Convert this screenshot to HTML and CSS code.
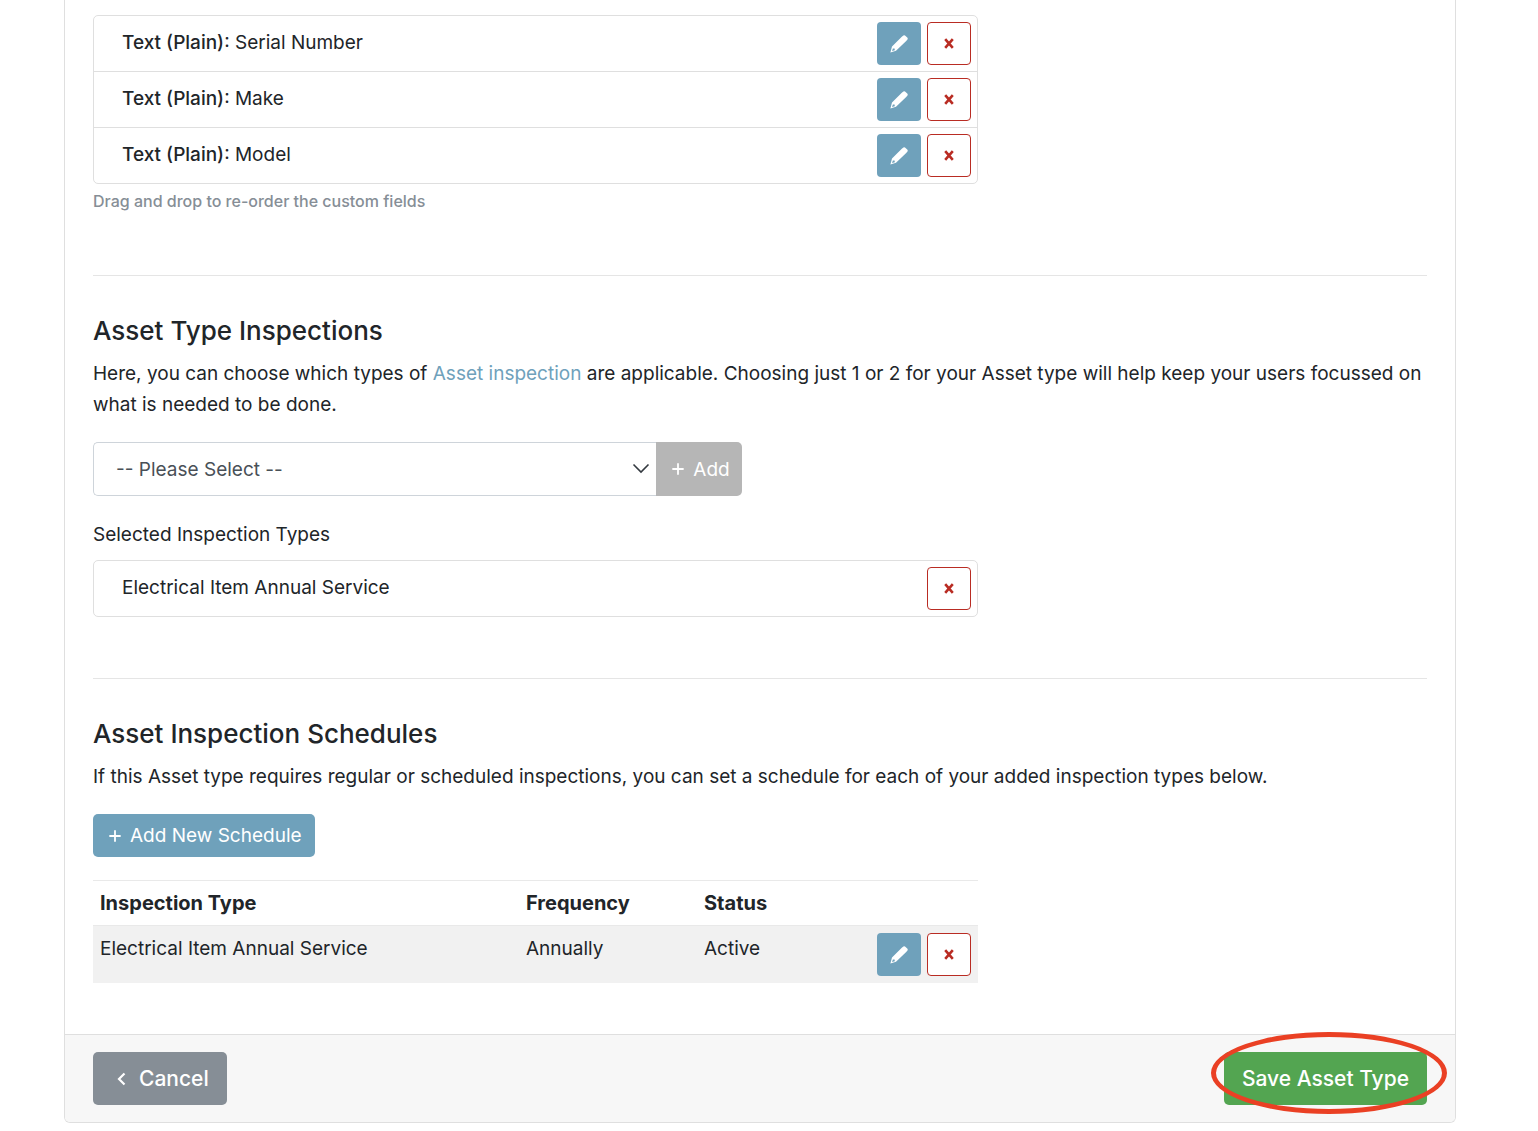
FILE: index.html
```html
<!DOCTYPE html>
<html lang="en">
    <head>
        <meta charset="utf-8">
        <title>Asset Type</title>
        <link rel="stylesheet" href="styles.css">
    </head>
    <body>
        <!-- shared icons -->
        <svg class="sprite" aria-hidden="true">
            <symbol id="pencil" viewBox="0 0 18 18">
                <path fill-rule="evenodd" d="M11.8 1.8 L13.4 0.5 Q14.2 0 15 0.5 L17.5 2.8 Q18 3.6 17.5 4.4 L16.2 6 L6 15.8 L0.4 17.6 L2 11.6 Z M2.9 13.4 L2 16 L4.8 15.2 L4.6 13.6 Z"/>
            </symbol>
            <symbol id="cross" viewBox="0 0 10 11">
                <path d="M1.2 1.2 L8.8 9.8 M8.8 1.2 L1.2 9.8"/>
            </symbol>
            <symbol id="plus" viewBox="0 0 12 12">
                <path d="M6 1 V11 M1 6 H11"/>
            </symbol>
        </svg>

        <form class="card">
            <div class="card-body">
                <section>
                    <ul class="list">
                        <li>
                            <span class="name"><b>Text (Plain)</b>: Serial Number</span>
                            <button type="button" class="btn btn-icon btn-blue" aria-label="Edit"><svg class="pencil"><use href="#pencil"/></svg></button>
                            <button type="button" class="btn btn-icon btn-red" aria-label="Remove"><svg class="cross"><use href="#cross"/></svg></button>
                        </li>
                        <li>
                            <span class="name"><b>Text (Plain)</b>: Make</span>
                            <button type="button" class="btn btn-icon btn-blue" aria-label="Edit"><svg class="pencil"><use href="#pencil"/></svg></button>
                            <button type="button" class="btn btn-icon btn-red" aria-label="Remove"><svg class="cross"><use href="#cross"/></svg></button>
                        </li>
                        <li>
                            <span class="name"><b>Text (Plain)</b>: Model</span>
                            <button type="button" class="btn btn-icon btn-blue" aria-label="Edit"><svg class="pencil"><use href="#pencil"/></svg></button>
                            <button type="button" class="btn btn-icon btn-red" aria-label="Remove"><svg class="cross"><use href="#cross"/></svg></button>
                        </li>
                    </ul>
                    <p class="hint">Drag and drop to re-order the custom fields</p>
                </section>

                <section>
                    <h2>Asset Type Inspections</h2>
                    <p>Here, you can choose which types of <a href="#">Asset inspection</a> are applicable. Choosing just 1 or 2 for your Asset type will help keep your users focussed on what is needed to be done.</p>
                    <div class="input-group">
                        <div class="select">
                            <select aria-label="Inspection type">
                                <option>-- Please Select --</option>
                            </select>
                            <svg class="chevron" viewBox="0 0 18 11"><path d="M1.5 1.5 L9 9 L16.5 1.5"/></svg>
                        </div>
                        <button type="button" class="btn btn-add"><svg class="plus"><use href="#plus"/></svg>Add</button>
                    </div>
                    <div class="label" id="selected">Selected Inspection Types</div>
                    <ul class="list" aria-labelledby="selected">
                        <li>
                            <span class="name">Electrical Item Annual Service</span>
                            <button type="button" class="btn btn-icon btn-red" aria-label="Remove"><svg class="cross"><use href="#cross"/></svg></button>
                        </li>
                    </ul>
                </section>

                <section>
                    <h2>Asset Inspection Schedules</h2>
                    <p>If this Asset type requires regular or scheduled inspections, you can set a schedule for each of your added inspection types below.</p>
                    <button type="button" class="btn btn-blue btn-new"><svg class="plus"><use href="#plus"/></svg>Add New Schedule</button>
                    <table>
                        <thead>
                            <tr>
                                <th class="col-type">Inspection Type</th>
                                <th class="col-freq">Frequency</th>
                                <th class="col-status">Status</th>
                                <th></th>
                            </tr>
                        </thead>
                        <tbody>
                            <tr>
                                <td>Electrical Item Annual Service</td>
                                <td>Annually</td>
                                <td>Active</td>
                                <td>
                                    <div class="actions">
                                        <button type="button" class="btn btn-icon btn-blue" aria-label="Edit"><svg class="pencil"><use href="#pencil"/></svg></button>
                                        <button type="button" class="btn btn-icon btn-red" aria-label="Remove"><svg class="cross"><use href="#cross"/></svg></button>
                                    </div>
                                </td>
                            </tr>
                        </tbody>
                    </table>
                </section>
            </div>

            <div class="card-footer">
                <button type="button" class="btn btn-lg btn-grey"><svg class="back" viewBox="0 0 9 14"><path d="M7.5 1.5 L2 7 L7.5 12.5"/></svg>Cancel</button>
                <div class="save">
                    <button type="submit" class="btn btn-lg btn-green">Save Asset Type</button>
                    <div class="ring"></div>
                </div>
            </div>
        </form>
    </body>
</html>
```

FILE: styles.css
```css
*{
    box-sizing: border-box;
}
body{
    margin: 0;
    padding: 0 82px 8px 64px;
    font-family: Inter, "Liberation Sans", sans-serif;
    font-size: 19px;
    font-weight: 400;
    line-height: 31px;
    color: #212529;
    background-color: #fff;
}
.sprite{
    display: none;
}
.card{
    border: 1px solid #dfdfdf;
    border-top: none;
    border-radius: 0 0 6px 6px;
}
.card-body{
    padding: 15px 28px 51px;
}
section + section{
    margin-top: 61px;
    padding-top: 38px;
    border-top: 1px solid #e5e5e5;
}
h2{
    margin: 0 0 10px;
    font-size: 26px;
    font-weight: 500;
    line-height: 34px;
}
p{
    margin: 0 0 22px;
}
a{
    color: #6fa1bb;
    text-decoration: none;
}
b{
    font-weight: 500;
}

/* bordered lists */
.list{
    max-width: 885px;
    margin: 0;
    padding: 0;
    list-style: none;
    border: 1px solid #dfdfdf;
    border-radius: 5px;
}
.list li{
    display: flex;
    gap: 6px;
    padding: 6px 6px 6px 28px;
}
.list li + li{
    border-top: 1px solid #dfdfdf;
}
.name{
    flex: 1;
    padding-top: 5px;
}
.hint{
    margin: 5px 0 0;
    font-size: 16px;
    font-weight: 500;
    line-height: 25px;
    color: #868e96;
}
.label{
    margin: 23px 0 10px;
}

/* buttons */
.btn{
    display: flex;
    align-items: center;
    justify-content: center;
    height: 43px;
    padding: 0 13px;
    border: none;
    border-radius: 5px;
    font-family: inherit;
    font-size: 19px;
    font-weight: 500;
    white-space: nowrap;
    color: #fff;
}
.btn-icon{
    width: 44px;
    padding: 0;
    border-radius: 4px;
}
.btn-blue{
    background-color: #6fa1bb;
}
.btn-red{
    background-color: #fff;
    border: 1px solid #b92c23;
    color: #b92c23;
}
.btn-green{
    background-color: #53a551;
}
.btn-new{
    padding: 0 13px 0 16px;
    font-weight: 400;
}
.btn-lg{
    height: 53px;
    padding: 0 18px;
    font-size: 21px;
}
.btn-grey{
    padding-left: 24px;
    background-color: #868e96;
}
.pencil{
    width: 18px;
    height: 18px;
    fill: #fff;
}
.cross{
    width: 10px;
    height: 11px;
    fill: none;
    stroke: #b92c23;
    stroke-width: 2.6;
}
.plus{
    width: 12px;
    height: 12px;
    margin-right: 9px;
    stroke: #fff;
    stroke-width: 1.8;
    stroke-linecap: round;
}
.back{
    width: 9px;
    height: 14px;
    margin-right: 13px;
    fill: none;
    stroke: #fff;
    stroke-width: 2.2;
}

/* select with add button */
.input-group{
    display: flex;
    max-width: 649px;
    height: 54px;
}
.select{
    position: relative;
    flex: 1;
}
select{
    width: 100%;
    height: 100%;
    padding: 0 40px 0 22px;
    appearance: none;
    border: 1px solid #ced4da;
    border-right: none;
    border-radius: 5px 0 0 5px;
    background-color: #fff;
    font-family: inherit;
    font-size: 19px;
    font-weight: 400;
    color: #495057;
}
.chevron{
    position: absolute;
    right: 6px;
    top: 21px;
    width: 18px;
    height: 11px;
    fill: none;
    stroke: #343a40;
    stroke-width: 1.6;
    pointer-events: none;
}
.btn-add{
    width: 86px;
    height: 100%;
    padding: 0 12px 0 16px;
    border-radius: 0 5px 5px 0;
    background-color: #b6b6b6;
    font-weight: 400;
}

/* schedules */
table{
    width: 100%;
    max-width: 885px;
    margin-top: 23px;
    table-layout: fixed;
    border-collapse: collapse;
}
th, td{
    padding: 7px;
    text-align: left;
    vertical-align: top;
    border-top: 1px solid #e9e9e9;
}
th{
    padding-bottom: 6px;
    font-size: 20px;
    font-weight: 700;
}
td{
    background-color: #f1f1f1;
}
.col-type{
    width: 426px;
}
.col-freq{
    width: 178px;
}
.col-status{
    width: 160px;
}
.actions{
    display: flex;
    gap: 6px;
    justify-content: flex-end;
}

.card-footer{
    display: flex;
    justify-content: space-between;
    padding: 17px 28px;
    border-top: 1px solid #dfdfdf;
    border-radius: 0 0 5px 5px;
    background-color: #f7f7f7;
}
.save{
    position: relative;
}
.ring{
    position: absolute;
    inset: -20px -20px -9px -13px;
    border: 5px solid #ea4024;
    border-radius: 50%;
    pointer-events: none;
}
```
